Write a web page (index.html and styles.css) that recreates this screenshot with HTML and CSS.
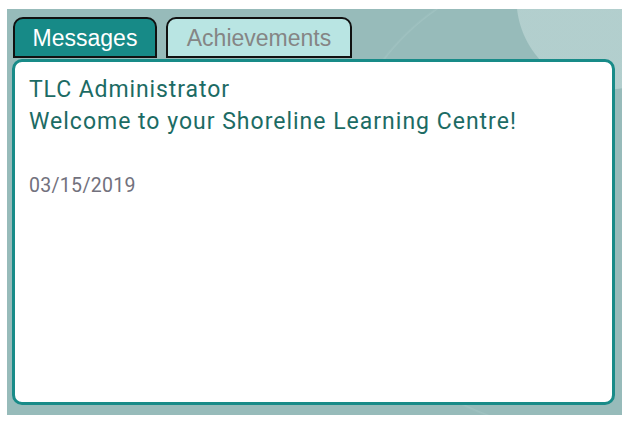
FILE: index.html
```html
<!DOCTYPE html>
<html>
<head>
<meta charset="utf-8">
<link rel="stylesheet" href="styles.css">
</head>
<body>
<div class="panel">
  <div class="tabs">
    <div class="tab tab-active">Messages</div>
    <div class="tab tab-inactive">Achievements</div>
  </div>
  <div class="card">
    <div class="msg-from">TLC Administrator</div>
    <div class="msg-text">Welcome to your Shoreline Learning Centre!</div>
    <div class="msg-date">03/15/2019</div>
  </div>
</div>
</body>
</html>
```

FILE: styles.css
```css
html, body {
  margin: 0;
  padding: 0;
  background: #ffffff;
}
.panel {
  box-sizing: border-box;
  width: 615px;
  height: 406px;
  margin: 9px 0 0 7px;
  padding: 8px 7px 10px 5px;
  display: flex;
  flex-direction: column;
  background-color: #97bbba;
  background-image:
    radial-gradient(circle at 600px -10px, rgba(190,215,214,0.7) 0 90px, rgba(190,215,214,0) 91px),
    radial-gradient(circle at 560px 190px, rgba(255,255,255,0) 0 229px, rgba(165,198,197,0.6) 230px, rgba(165,198,197,0) 232px);
}
.tabs {
  display: flex;
  gap: 9px;
  padding-left: 1px;
  height: 42px;
}
.tab {
  box-sizing: border-box;
  height: 41px;
  border: 2px solid #111;
  border-radius: 10px 10px 0 0;
  display: flex;
  align-items: center;
  justify-content: center;
  font-family: "Liberation Sans", Arial, sans-serif;
  font-size: 23px;
  padding-top: 2px;
}
.tab-active {
  width: 144px;
  background: #178a87;
  color: #ffffff;
}
.tab-inactive {
  width: 186px;
  background: #b9e5e3;
  color: #858585;
}
.card {
  flex: 1;
  box-sizing: border-box;
  background: #ffffff;
  border: 3px solid #188b88;
  border-radius: 10px;
  padding: 12px 14px;
  font-family: Roboto, "Liberation Sans", sans-serif;
}
.msg-from, .msg-text {
  font-size: 23px;
  line-height: 32px;
  letter-spacing: 0.95px;
  color: #1c6b64;
}
.msg-from {
  letter-spacing: 0.9px;
}
.msg-text {
  letter-spacing: 1px;
}
.msg-date {
  margin-top: 35px;
  font-size: 19.5px;
  line-height: 26px;
  letter-spacing: 0.3px;
  color: #72717d;
}
```
